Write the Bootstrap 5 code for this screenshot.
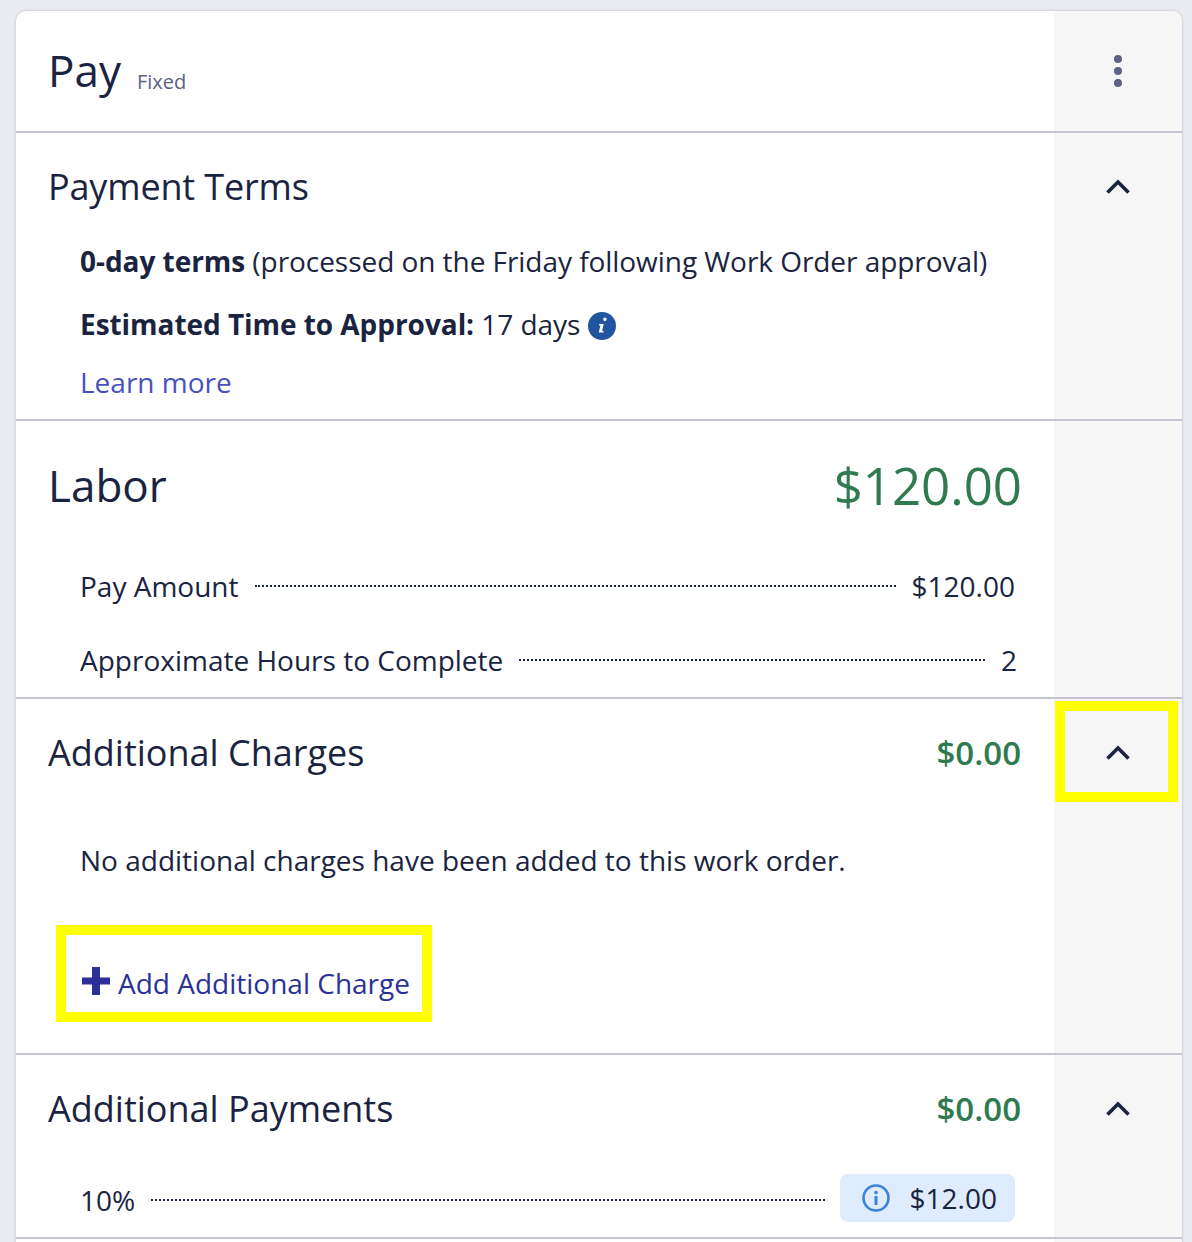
<!DOCTYPE html>
<html lang="en">
<head>
<meta charset="utf-8">
<title>Pay</title>
<link href="https://cdn.jsdelivr.net/npm/bootstrap@5.3.0/dist/css/bootstrap.min.css" rel="stylesheet">
<style>
html,body{height:1242px;overflow:hidden}
body{background:#e9ebf0;font-family:"Open Sans","Liberation Sans",sans-serif;color:#1a2440;font-size:28px;line-height:38px;padding:11px 10px 0 16px}
.pay-panel{background:#fff;border-radius:10px 10px 0 0;box-shadow:0 0 3px rgba(120,125,150,.45);position:relative;height:1240px;overflow:hidden;width:1166px}
.pay-sec{border-bottom:2px solid #c3c6d2}
.pay-main{flex:1 1 auto;min-width:0;padding-left:32px;padding-right:33px}
.pay-side{flex:0 0 128px;background:#f6f6f6;display:flex;justify-content:center}
.h-pay{font-size:44px;line-height:60px;font-weight:400;margin:0}
.pay-fixed{font-size:20px;color:#5c6282;margin-left:16px;position:relative;top:2px}
.h-sub{font-size:36px;line-height:46px;font-weight:400;margin:0}
.sub-tight{letter-spacing:-.16px}
.amt-sm{font-size:33px;line-height:46px;font-weight:600;color:#2f7a4f}
.amt-lg{font-size:51px;line-height:60px;color:#2f7a4f;margin-right:-1px}
.indent{padding-left:32px}
.tight{letter-spacing:-.05px}
.t-link{color:#4a50c0;text-decoration:none}
.leader{flex:1 1 auto;border-bottom:2px dotted #1a2440;margin:0 16px}
.leader-end{margin-right:15px}
.drop-two{margin-top:4px}
.pill-blue{background:#deecfd;border-radius:8px;padding:5px 18px 5px 22px;display:flex;align-items:center;gap:20px;margin-right:6px}
.add-link{color:#2b3198;text-decoration:none;font-size:28px;display:inline-flex;align-items:center;gap:8px}
.plus-ic{margin-left:2px;margin-top:-4px}
.flag{position:absolute;border:10px solid #ff0;pointer-events:none}
.flag-a{left:1039px;top:690px;width:123px;height:101px}
.flag-b{left:40px;top:914px;width:376px;height:97px}
.sec-head{height:122px}
.sec-terms{height:288px}
.sec-labor{height:278px}
.sec-charges{height:356px}
.sec-payments{height:184px}
.sec-last{height:60px}
.ic-chev{margin-top:46px}
.ic-dots{margin-top:43px}
.pt-head{padding-top:29px}
.pt-sub{padding-top:31px}
.pt-labor{padding-top:34px}
.gap-a{margin-top:32px}
.gap-b{margin-top:25px}
.gap-c{margin-top:20px}
.gap-d{margin-top:52px;padding-right:6px}
.gap-e{margin-top:36px;padding-right:4px}
.gap-f{margin-top:65px}
.gap-g{margin-top:85px}
.gap-h{margin-top:42px}
</style>
</head>
<body>
<div class="pay-panel">
  <section class="pay-sec sec-head d-flex">
    <div class="pay-main pt-head d-flex align-items-baseline">
      <h1 class="h-pay">Pay</h1><span class="pay-fixed">Fixed</span>
    </div>
    <div class="pay-side">
      <svg class="ic-dots" width="12" height="34" viewBox="0 0 12 34"><circle cx="6" cy="5" r="4" fill="#5c6282"/><circle cx="6" cy="17" r="4" fill="#5c6282"/><circle cx="6" cy="29" r="4" fill="#5c6282"/></svg>
    </div>
  </section>
  <section class="pay-sec sec-terms d-flex">
    <div class="pay-main pt-sub">
      <h2 class="h-sub sub-tight">Payment Terms</h2>
      <div class="indent tight gap-a"><b class="fw-bold">0-day terms</b> (processed on the Friday following Work Order approval)</div>
      <div class="indent tight gap-b d-flex align-items-center"><span><b class="fw-bold">Estimated Time to Approval:</b> 17 days</span>
        <svg class="ms-2 drop-two" width="28" height="28" viewBox="0 0 28 28"><circle cx="14" cy="14" r="14" fill="#22559f"/><path d="M15.2 7.2a1.7 1.7 0 1 1 0 .01zM11.3 12h4.4l-1.6 7h1.6l-.3 1.6h-4.6l1.6-7h-1.4z" fill="#fff"/></svg>
      </div>
      <div class="indent gap-c"><a class="t-link" href="#">Learn more</a></div>
    </div>
    <div class="pay-side"><svg class="ic-chev" width="26" height="16" viewBox="0 0 26 16"><path d="M2.5 13.5 13 3l10.5 10.5" fill="none" stroke="#1a2440" stroke-width="3.6"/></svg></div>
  </section>
  <section class="pay-sec sec-labor d-flex">
    <div class="pay-main pt-labor">
      <div class="d-flex justify-content-between align-items-center">
        <h2 class="h-pay">Labor</h2><span class="amt-lg">$120.00</span>
      </div>
      <div class="indent gap-d d-flex align-items-center"><span>Pay Amount</span><span class="leader"></span><span>$120.00</span></div>
      <div class="indent gap-e d-flex align-items-center"><span>Approximate Hours to Complete</span><span class="leader"></span><span>2</span></div>
    </div>
    <div class="pay-side"></div>
  </section>
  <section class="pay-sec sec-charges d-flex">
    <div class="pay-main pt-sub">
      <div class="d-flex justify-content-between align-items-center">
        <h2 class="h-sub">Additional Charges</h2><span class="amt-sm">$0.00</span>
      </div>
      <div class="indent gap-f">No additional charges have been added to this work order.</div>
      <div class="indent gap-g"><a class="add-link" href="#"><svg class="plus-ic" width="28" height="28" viewBox="0 0 28 28"><path d="M10 0h8v10.500h10v7H18V28h-8V17.500H0v-7h10z" fill="#2b3198"/></svg>Add Additional Charge</a></div>
    </div>
    <div class="pay-side"><svg class="ic-chev" width="26" height="16" viewBox="0 0 26 16"><path d="M2.5 13.5 13 3l10.5 10.5" fill="none" stroke="#1a2440" stroke-width="3.6"/></svg></div>
  </section>
  <section class="pay-sec sec-payments d-flex">
    <div class="pay-main pt-sub">
      <div class="d-flex justify-content-between align-items-center">
        <h2 class="h-sub">Additional Payments</h2><span class="amt-sm">$0.00</span>
      </div>
      <div class="indent gap-h d-flex align-items-center"><span class="drop-two">10%</span><span class="leader leader-end drop-two"></span>
        <span class="pill-blue"><svg width="28" height="28" viewBox="0 0 28 28"><circle cx="14" cy="14" r="12.500" fill="none" stroke="#3d82d8" stroke-width="2.600"/><circle cx="14" cy="8.600" r="1.800" fill="#3d82d8"/><rect x="12.500" y="12" width="3" height="9" fill="#3d82d8"/></svg><span>$12.00</span></span>
      </div>
    </div>
    <div class="pay-side"><svg class="ic-chev" width="26" height="16" viewBox="0 0 26 16"><path d="M2.5 13.5 13 3l10.5 10.5" fill="none" stroke="#1a2440" stroke-width="3.6"/></svg></div>
  </section>
  <section class="sec-last d-flex"><div class="pay-main"></div><div class="pay-side"></div></section>
  <div class="flag flag-a"></div>
  <div class="flag flag-b"></div>
</div>
<script src="https://cdn.jsdelivr.net/npm/bootstrap@5.3.0/dist/js/bootstrap.bundle.min.js"></script>
</body>
</html>
